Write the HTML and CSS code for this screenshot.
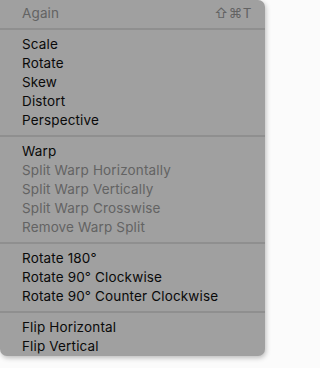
FILE: index.html
```html
<!DOCTYPE html>
<html>
<head>
<meta charset="utf-8">
<link rel="stylesheet" href="styles.css">
</head>
<body>
<div class="menu">
  <div class="item disabled"><span>Again</span><span class="key">⇧⌘T</span></div>
  <div class="sep"></div>
  <div class="item">Scale</div>
  <div class="item">Rotate</div>
  <div class="item">Skew</div>
  <div class="item">Distort</div>
  <div class="item">Perspective</div>
  <div class="sep"></div>
  <div class="item">Warp</div>
  <div class="item disabled">Split Warp Horizontally</div>
  <div class="item disabled">Split Warp Vertically</div>
  <div class="item disabled">Split Warp Crosswise</div>
  <div class="item disabled">Remove Warp Split</div>
  <div class="sep"></div>
  <div class="item">Rotate 180°</div>
  <div class="item">Rotate 90° Clockwise</div>
  <div class="item">Rotate 90° Counter Clockwise</div>
  <div class="sep"></div>
  <div class="item">Flip Horizontal</div>
  <div class="item">Flip Vertical</div>
</div>
</body>
</html>
```
FILE: styles.css
```css
html, body {
  margin: 0;
  padding: 0;
  background: #fbfbfb;
}
body {
  width: 272px;
  height: 368px;
  overflow: hidden;
}
.menu {
  width: 265px;
  height: 356px;
  box-sizing: border-box;
  padding-top: 4px;
  background: #a0a0a0;
  border-radius: 0 7px 7px 7px;
  box-shadow: 1px 2px 5px rgba(0, 0, 0, 0.25);
  font-family: "Inter", "Noto Sans", sans-serif;
  font-size: 13.5px;
  letter-spacing: 0.15px;
  color: #0a0a0a;
}
.item {
  height: 19px;
  line-height: 19px;
  padding: 0 13px 0 22px;
  display: flex;
  justify-content: space-between;
  white-space: nowrap;
}
.disabled {
  color: #636363;
}
.key {
  letter-spacing: 0.5px;
}
.sep {
  height: 2px;
  margin: 5px 0;
  background: #8f8f8f;
}
```
